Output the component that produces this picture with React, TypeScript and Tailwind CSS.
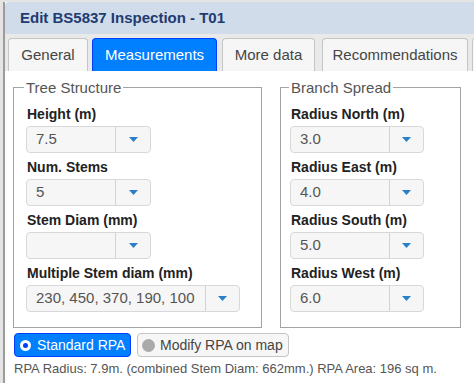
const tabs = [
  { name: "General", w: "w-[80px]", active: false },
  { name: "Measurements", w: "w-[125px]", active: true },
  { name: "More data", w: "w-[93px]", active: false },
  { name: "Recommendations", w: "w-[146px]", active: false },
];

function Arrow() {
  return (
    <svg width="9" height="5" viewBox="0 0 9 5">
      <path d="M0 0 L9 0 L4.5 5 Z" fill="#2b7fc9" />
    </svg>
  );
}

function Select({ value, width, right }: { value: string; width: string; right: string }) {
  return (
    <div className={`${width} h-[27px] flex border border-[#d8d8d8] rounded-[4px] bg-[#f6f6f6]`}>
      <div className="flex-1 flex items-center pl-[9px] text-[15px] text-[#555]">{value}</div>
      <div className={`${right} border-l border-[#d3d3d3] flex items-center justify-center`}>
        <Arrow />
      </div>
    </div>
  );
}

function Field({ label, value, width, right }: { label: string; value: string; width: string; right: string }) {
  return (
    <div className="mt-[5px] first:mt-0">
      <div className="text-[14px] font-bold leading-[18px] text-[#222] mb-[3px] pl-px">{label}</div>
      <Select value={value} width={width} right={right} />
    </div>
  );
}

export default function App() {
  return (
    <div className="w-[474px] h-[383px] overflow-hidden bg-[#e4e4e4] pl-[3px] pt-[2px] font-['Liberation_Sans',Arial,sans-serif]">
      <div className="h-full border-l-2 border-[#9c9c9c] bg-white">
        {/* Title bar */}
        <div className="h-[32px] bg-[#d0dcea] rounded-tl-[4px] flex items-center pl-[15px]">
          <span className="text-[15px] font-bold text-[#1f3b70]">Edit BS5837 Inspection - T01</span>
        </div>

        {/* Tabs */}
        <div className="h-[37px] bg-[#e9e9e9] pt-[4px] pl-[3px] flex overflow-hidden">
          {tabs.map((t, i) => (
            <div
              key={t.name}
              className={`${t.w} shrink-0 h-[33px] rounded-t-[4px] border border-b-0 flex items-center justify-center text-[15px] ${
                i === 0 ? "" : i === 1 ? "ml-[4px]" : i === 2 ? "ml-[5px]" : "ml-[7px]"
              } ${
                t.active
                  ? "bg-[#007fff] border-[#003eff] text-white"
                  : "bg-[#f6f6f6] border-[#c5c5c5] text-[#454545]"
              }`}
            >
              {t.name}
            </div>
          ))}
          <div className="w-[20px] shrink-0 ml-[4px] h-[33px] rounded-t-[4px] border border-b-0 border-[#c5c5c5] bg-[#f6f6f6]" />
        </div>

        {/* Panel */}
        <div className="pt-[8px] pl-[8px]">
          <div className="flex gap-[18px]">
            <fieldset className="w-[249px] border border-[#a3a3a3] pb-[15px]">
              <legend className="ml-[10px] px-[2px] text-[15px] leading-[17px] text-[#555]">Tree Structure</legend>
              <div className="pt-[9px] pl-[12px]">
                <Field label="Height (m)" value="7.5" width="w-[125px]" right="w-[35px]" />
                <Field label="Num. Stems" value="5" width="w-[125px]" right="w-[35px]" />
                <Field label="Stem Diam (mm)" value="" width="w-[125px]" right="w-[35px]" />
                <Field label="Multiple Stem diam (mm)" value="230, 450, 370, 190, 100" width="w-[214px]" right="w-[34px]" />
              </div>
            </fieldset>
            <fieldset className="w-[181px] border border-[#a3a3a3] pb-[15px]">
              <legend className="ml-[8px] px-[2px] text-[15px] leading-[17px] text-[#555]">Branch Spread</legend>
              <div className="pt-[9px] pl-[9px]">
                <Field label="Radius North (m)" value="3.0" width="w-[134px]" right="w-[34px]" />
                <Field label="Radius East (m)" value="4.0" width="w-[134px]" right="w-[34px]" />
                <Field label="Radius South (m)" value="5.0" width="w-[134px]" right="w-[34px]" />
                <Field label="Radius West (m)" value="6.0" width="w-[134px]" right="w-[34px]" />
              </div>
            </fieldset>
          </div>

          {/* RPA mode */}
          <div className="flex gap-[6px] mt-[5px] pl-px whitespace-nowrap">
            <div className="w-[117px] h-[24px] rounded-[4px] bg-[#007fff] border border-[#003eff] flex items-center pl-[5px]">
              <span className="w-[11px] h-[11px] rounded-full bg-white flex items-center justify-center">
                <span className="w-[5px] h-[5px] rounded-full bg-[#003eff]" />
              </span>
              <span className="ml-[6px] text-[14px] text-white">Standard RPA</span>
            </div>
            <div className="w-[152px] h-[24px] rounded-[4px] bg-[#f6f6f6] border border-[#c5c5c5] flex items-center pl-[4px]">
              <span className="w-[13px] h-[13px] rounded-full bg-[#aaaaaa]" />
              <span className="ml-[5px] text-[14px] text-[#454545]">Modify RPA on map</span>
            </div>
          </div>

          <div className="mt-[4px] pl-px text-[13px] leading-[15px] text-[#555] whitespace-nowrap">
            RPA Radius: 7.9m. (combined Stem Diam: 662mm.) RPA Area: 196 sq m.
          </div>
        </div>
      </div>
    </div>
  );
}
